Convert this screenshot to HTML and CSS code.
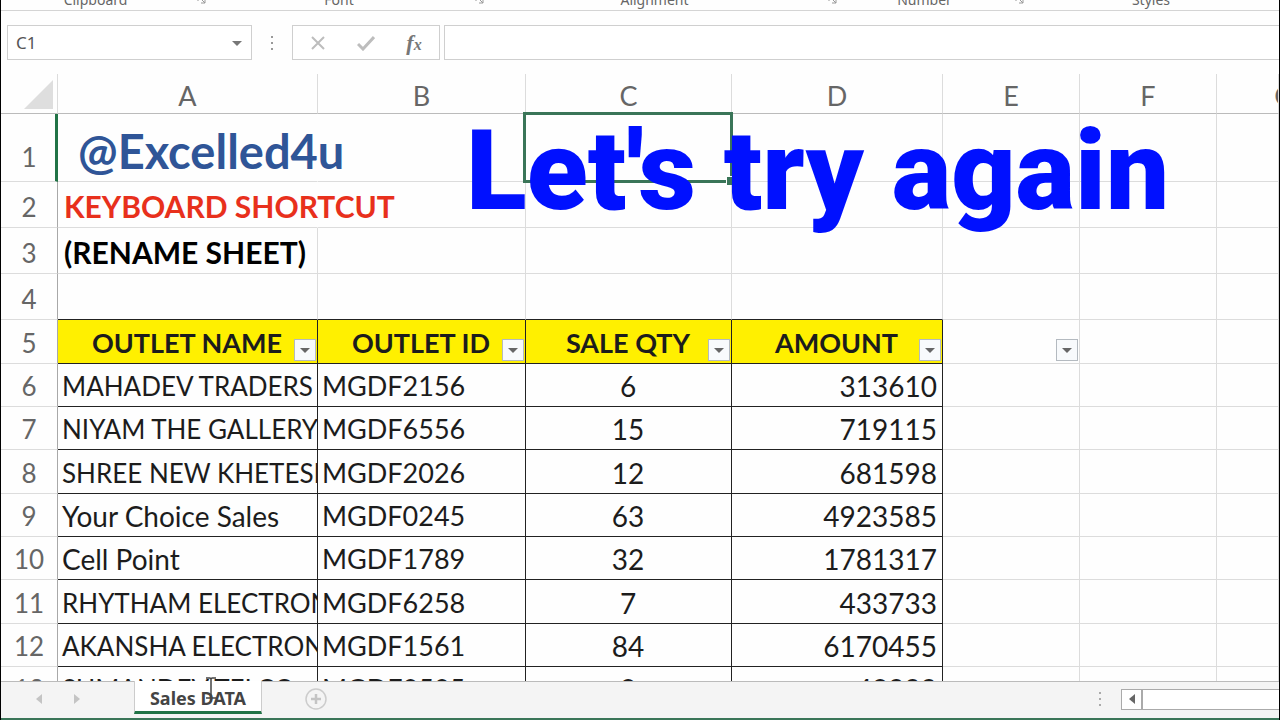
FILE: index.html
```html
<!DOCTYPE html>
<html lang="en">
<head>
    <meta charset="UTF-8">
    <meta name="viewport" content="width=device-width, initial-scale=1.0">
    <title>Sales DATA</title>
    <link rel="stylesheet" href="styles.css">
</head>
<body>
    <div class="ribbon">
        <div class="group"><span>Clipboard</span><svg class="launcher" viewBox="0 0 10 10"><path d="M1 1v5M1 1h5M4 4l4 4M8 4v4H4"/></svg></div>
        <div class="group"><span>Font</span><svg class="launcher" viewBox="0 0 10 10"><path d="M1 1v5M1 1h5M4 4l4 4M8 4v4H4"/></svg></div>
        <div class="group"><span>Alignment</span><svg class="launcher" viewBox="0 0 10 10"><path d="M1 1v5M1 1h5M4 4l4 4M8 4v4H4"/></svg></div>
        <div class="group"><span>Number</span><svg class="launcher" viewBox="0 0 10 10"><path d="M1 1v5M1 1h5M4 4l4 4M8 4v4H4"/></svg></div>
        <div class="group last"><span>Styles</span></div>
    </div>

    <div class="formula-bar">
        <div class="name-box">
            <input type="text" value="C1" aria-label="Name Box">
            <button type="button" aria-label="Open name list"><svg width="10" height="5" viewBox="0 0 10 5"><path d="M0 0h10L5 5z" fill="#777"/></svg></button>
        </div>
        <svg class="grip" width="4" height="16" viewBox="0 0 4 16"><path d="M1 1h2v2H1zM1 7h2v2H1zM1 13h2v2H1z" fill="#999"/></svg>
        <div class="formula-buttons">
            <button type="button" aria-label="Cancel"><svg width="16" height="16" viewBox="0 0 16 16"><path d="M2 2l12 12M14 2L2 14" stroke="#bdbdbd" stroke-width="2" fill="none"/></svg></button>
            <button type="button" aria-label="Enter"><svg width="18" height="16" viewBox="0 0 18 16"><path d="M1 9l5 5L17 2" stroke="#bdbdbd" stroke-width="3" fill="none"/></svg></button>
            <button type="button" class="fx" aria-label="Insert Function"><i>f</i><i class="sub">x</i></button>
        </div>
        <input type="text" class="formula" aria-label="Formula Bar">
    </div>

    <main class="sheet">
        <table>
            <colgroup>
                <col class="w-num"><col class="w-a"><col class="w-b"><col class="w-c"><col class="w-d"><col class="w-e"><col class="w-e"><col>
            </colgroup>
            <thead>
                <tr>
                    <th class="corner"><svg width="29" height="29" viewBox="0 0 29 29"><path d="M29 0v29H0z" fill="#dedede"/></svg></th>
                    <th scope="col">A</th><th scope="col">B</th><th scope="col">C</th><th scope="col">D</th><th scope="col">E</th><th scope="col">F</th><th scope="col" class="col-g"><span>G</span></th>
                </tr>
            </thead>
            <tbody>
                <tr class="row-1"><th scope="row">1</th><td class="open brand">@Excelled4u</td><td></td><td class="selected"></td><td></td><td></td><td></td><td></td></tr>
                <tr class="row-top"><th scope="row">2</th><td class="open title red">KEYBOARD SHORTCUT</td><td></td><td></td><td></td><td></td><td></td><td></td></tr>
                <tr class="row-top"><th scope="row">3</th><td class="title">(RENAME SHEET)</td><td></td><td></td><td></td><td></td><td></td><td></td></tr>
                <tr class="row-top above"><th scope="row">4</th><td></td><td></td><td></td><td></td><td></td><td></td><td></td></tr>
                <tr class="head tall">
                    <th scope="row">5</th>
                    <td>OUTLET NAME<button type="button" class="filter" aria-label="Filter outlet name"></button></td>
                    <td>OUTLET ID<button type="button" class="filter" aria-label="Filter outlet ID"></button></td>
                    <td>SALE QTY<button type="button" class="filter" aria-label="Filter sale qty"></button></td>
                    <td>AMOUNT<button type="button" class="filter" aria-label="Filter amount"></button></td>
                    <td><button type="button" class="filter" aria-label="Filter column E"></button></td><td></td><td></td>
                </tr>
                <tr class="data"><th scope="row">6</th><td class="caps">MAHADEV TRADERS</td><td>MGDF2156</td><td>6</td><td>313610</td><td></td><td></td><td></td></tr>
                <tr class="data"><th scope="row">7</th><td class="caps">NIYAM THE GALLERY</td><td>MGDF6556</td><td>15</td><td>719115</td><td></td><td></td><td></td></tr>
                <tr class="data tall"><th scope="row">8</th><td class="caps">SHREE NEW KHETESH</td><td>MGDF2026</td><td>12</td><td>681598</td><td></td><td></td><td></td></tr>
                <tr class="data"><th scope="row">9</th><td>Your Choice Sales</td><td>MGDF0245</td><td>63</td><td>4923585</td><td></td><td></td><td></td></tr>
                <tr class="data"><th scope="row">10</th><td>Cell Point</td><td>MGDF1789</td><td>32</td><td>1781317</td><td></td><td></td><td></td></tr>
                <tr class="data tall"><th scope="row">11</th><td class="caps">RHYTHAM ELECTRON</td><td>MGDF6258</td><td>7</td><td>433733</td><td></td><td></td><td></td></tr>
                <tr class="data"><th scope="row">12</th><td class="caps">AKANSHA ELECTRON</td><td>MGDF1561</td><td>84</td><td>6170455</td><td></td><td></td><td></td></tr>
                <tr class="data"><th scope="row">13</th><td class="caps">SUMANDEV TELCO</td><td>MGDF2525</td><td>8</td><td>48999</td><td></td><td></td><td></td></tr>
            </tbody>
        </table>
    </main>

    <footer class="tab-bar">
        <button type="button" class="nav" aria-label="Previous sheet"><svg width="6" height="10" viewBox="0 0 6 10"><path d="M6 0v10L0 5z" fill="#c4c4c4"/></svg></button>
        <button type="button" class="nav" aria-label="Next sheet"><svg width="6" height="10" viewBox="0 0 6 10"><path d="M0 0v10l6-5z" fill="#c4c4c4"/></svg></button>
        <button type="button" class="tab">Sales DATA
            <svg class="cursor" width="12" height="22" viewBox="0 0 12 22"><path d="M1 1h4l1 1 1-1h4M6 2v18M1 21h4l1-1 1 1h4" stroke="#444" stroke-width="1.5" fill="none"/></svg>
        </button>
        <button type="button" class="add" aria-label="New sheet"><svg width="22" height="22" viewBox="0 0 22 22"><circle cx="11" cy="11" r="10" fill="none" stroke="#ccc" stroke-width="1.5"/><path d="M11 6v10M6 11h10" stroke="#c4c4c4" stroke-width="2.5"/></svg></button>
        <svg class="grip tab-grip" width="4" height="16" viewBox="0 0 4 16"><path d="M1 1h2v2H1zM1 7h2v2H1zM1 13h2v2H1z" fill="#aaa"/></svg>
        <div class="scrollbar">
            <button type="button" aria-label="Scroll left"><svg width="6" height="10" viewBox="0 0 6 10"><path d="M6 0v10L0 5z" fill="#666"/></svg></button>
        </div>
    </footer>

    <div class="caption">Let's try again</div>
</body>
</html>
```

FILE: styles.css
```css
* {
    box-sizing: border-box;
}

body {
    margin: 0;
    height: 100vh;
    display: flex;
    flex-direction: column;
    position: relative;
    overflow: hidden;
    background: #fefefe;
    border-left: 1px solid #000;
    border-right: 1px solid #000;
    font-family: Lato, "Noto Sans", sans-serif;
    color: #1c1c1c;
}

button {
    background: none;
    border: none;
    padding: 0;
    font: inherit;
    color: inherit;
}

/* ribbon */
.ribbon {
    flex: none;
    height: 11px;
    display: grid;
    grid-template-columns: 209fr 278fr 353fr 187fr 251fr;
    border-bottom: 1px solid #d4d4d4;
    overflow: hidden;
}

.group {
    display: flex;
    align-items: flex-end;
    height: 10px;
    font: 14px/21px "Noto Sans", sans-serif;
    color: #666;
}

.group span {
    flex: 1;
    text-align: center;
}

.group.last {
    padding-right: 5px;
}

.launcher {
    width: 10px;
    height: 10px;
    margin: 0 3px 5px 7px;
    fill: none;
    stroke: #999;
}

/* formula bar */
.formula-bar {
    flex: none;
    display: flex;
    align-items: center;
    height: 35px;
    margin: 14px 0 14px 6px;
}

.name-box,
.formula-buttons,
.formula {
    height: 35px;
    border: 1px solid #cfcfcf;
    background: #fff;
}

.name-box {
    display: flex;
    width: 245px;
}

.name-box input {
    flex: 1;
    min-width: 0;
    border: none;
    padding: 0 8px;
    background: none;
    font: 17px "Noto Sans", sans-serif;
    color: #555;
}

.name-box button {
    width: 28px;
    padding-bottom: 6px;
}

.grip {
    margin: 0 18px;
}

.formula-buttons {
    display: flex;
    width: 148px;
    padding: 0 1px;
}

.formula-buttons button {
    flex: 1;
    display: flex;
    align-items: center;
    justify-content: center;
}

.formula-buttons .fx {
    font: bold 22px "Liberation Serif", serif;
    color: #777;
}

.fx .sub {
    font-size: 16px;
    padding-top: 4px;
}

.formula {
    flex: 1;
    min-width: 0;
    margin-left: 4px;
    border-right: none;
}

/* grid */
.sheet {
    flex: 1;
    min-height: 0;
    overflow: hidden;
}

table {
    width: 100%;
    table-layout: fixed;
    border-collapse: separate;
    border-spacing: 0;
}

.w-num { width: 57px; }
.w-a { width: 260px; }
.w-b { width: 208px; }
.w-c { width: 206px; }
.w-d { width: 211px; }
.w-e { width: 137px; }

th,
td {
    position: relative;
    height: 43px;
    padding: 0 5px 0 4px;
    border-right: 1px solid #dcdcdc;
    border-bottom: 1px solid #dcdcdc;
    vertical-align: bottom;
    white-space: nowrap;
    font-size: 28px;
    line-height: 40px;
}

th {
    font-weight: normal;
    font-size: 27px;
    color: #666;
    padding: 0;
}

thead th {
    height: 40px;
    line-height: 34px;
    border-bottom-color: #bbb;
}

tbody th {
    font-size: 26px;
    border-right-color: #a8a8a8;
}

.corner svg {
    display: block;
    margin: 0 4px 4px auto;
}

.col-g {
    overflow: hidden;
    text-align: right;
}

.col-g span {
    margin-right: -16px;
}

.tall > * {
    height: 44px;
}

.row-top > * {
    height: 46px;
}

.row-1 > * {
    height: 68px;
    line-height: 48px;
}

.row-1 th {
    border-right: 3px solid #217346;
    padding-left: 2px;
}

.row-1 td:nth-child(3),
.open {
    border-right-color: transparent;
}

.brand {
    padding-left: 20px;
    line-height: 60px;
    font-size: 47px;
    font-weight: bold;
    color: #2f5597;
    z-index: 1;
}

.title {
    padding-left: 6px;
    font-size: 30px;
    line-height: 42px;
    font-weight: bold;
    color: #000;
    z-index: 1;
}

.title.red {
    color: #e8301c;
}

.selected::before {
    content: "";
    position: absolute;
    inset: -2px -2px -2px -3px;
    border: 3px solid #3a7558;
    z-index: 2;
}

.selected::after {
    content: "";
    position: absolute;
    right: -4px;
    bottom: -4px;
    width: 8px;
    height: 8px;
    border: solid #fff;
    border-width: 1px 0 0 1px;
    background: #3a7558;
    z-index: 3;
}

.above td:nth-child(-n+5) {
    border-bottom-color: #222;
}

.head td:nth-child(-n+5) {
    border-color: #222;
    background: #fff000;
    text-align: center;
    font-size: 27px;
    font-weight: bold;
}

.filter {
    position: absolute;
    right: 1px;
    bottom: 2px;
    width: 22px;
    height: 22px;
    border: 1px solid #b4bac0;
    background: #f8fafc;
}

.filter::after {
    content: "";
    position: absolute;
    left: 5px;
    top: 8px;
    border: 5px solid transparent;
    border-top-color: #666;
    border-bottom: none;
}

.data td:nth-child(-n+5) {
    border-color: #222;
}

.data td:nth-child(2) {
    overflow: hidden;
}

.data td:nth-child(3) {
    font-size: 27px;
}

.data .caps {
    font-size: 26px;
}

.data td:nth-child(4) {
    text-align: center;
}

.data td:nth-child(5) {
    text-align: right;
}

/* sheet tabs */
.tab-bar {
    flex: none;
    display: flex;
    align-items: center;
    height: 39px;
    padding-bottom: 2px;
    border-top: 1px solid #bbb;
    border-bottom: 2px solid #3a7558;
    background: #f4f4f4;
}

.nav {
    width: 38px;
    display: flex;
    justify-content: center;
}

.nav:first-child {
    margin-left: 19px;
}

.tab {
    position: relative;
    align-self: flex-start;
    width: 128px;
    height: 33px;
    margin: -1px 0 0 38px;
    padding-top: 4px;
    border: solid #ccc;
    border-width: 0 1px;
    border-bottom: 3px solid #217346;
    background: #fff;
    font: bold 18px/26px "Noto Sans", sans-serif;
    color: #444;
}

.cursor {
    position: absolute;
    left: 70px;
    top: -4px;
}

.add {
    display: flex;
    margin-left: 43px;
}

.tab-grip {
    margin: 0 19px 0 auto;
}

.scrollbar {
    width: 158px;
    height: 21px;
    border: 1px solid #aaa;
    border-right: none;
    background: #fff;
}

.scrollbar button {
    display: flex;
    align-items: center;
    justify-content: center;
    width: 21px;
    height: 19px;
    border-right: 2px solid #aaa;
}

.caption {
    position: absolute;
    left: 465px;
    top: 104px;
    font: 900 112px/134px Roboto, sans-serif;
    color: #0010ff;
    white-space: nowrap;
    z-index: 5;
}
```
